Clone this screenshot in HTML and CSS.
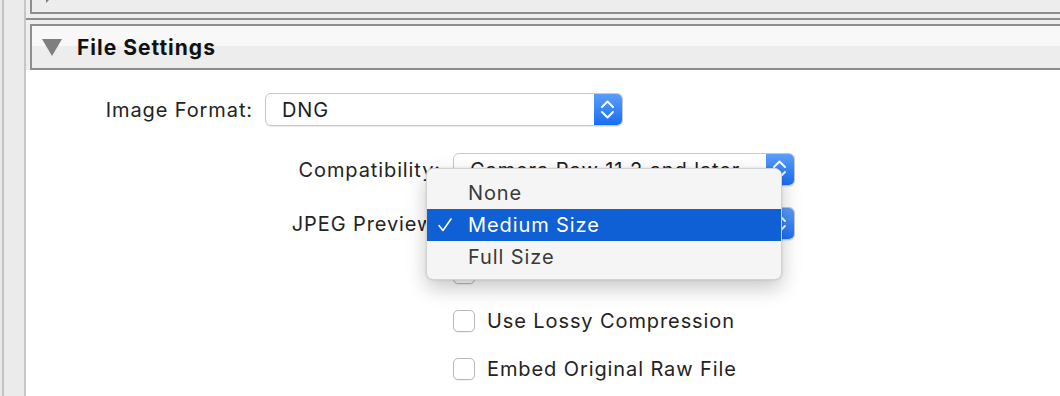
FILE: index.html
```html
<!DOCTYPE html>
<html>
<head>
<meta charset="utf-8">
<link rel="stylesheet" href="styles.css">
</head>
<body>
<div class="app">
  <aside class="rail"></aside>
  <main class="main">
    <div class="top">
      <div class="prev">
        <svg class="prev-tri" width="20" height="12" viewBox="0 0 20 12"><polygon points="14,-10 14,3 20,-3" fill="#7a7a7a"/></svg>
      </div>
      <div class="sep"></div>
      <div class="section-head">
        <svg class="disclosure" width="20" height="17" viewBox="0 0 20 17"><polygon points="0,0 20,0 10,17" fill="#7f7f7f"/></svg>
        <span class="section-title">File Settings</span>
      </div>
    </div>
    <div class="content">
      <div class="row row-main">
        <span class="lbl lbl-main">Image Format:</span>
        <div class="popup popup-main">
          <span class="popup-text">DNG</span>
          <span class="stepper"><svg width="29" height="33" viewBox="0 0 29 33"><polyline points="8,14 13.5,8.5 19,14" fill="none" stroke="#fff" stroke-width="2" stroke-linecap="round" stroke-linejoin="round"/><polyline points="8,19 13.5,24.5 19,19" fill="none" stroke="#fff" stroke-width="2" stroke-linecap="round" stroke-linejoin="round"/></svg></span>
        </div>
      </div>
      <div class="row row-sub row-compat">
        <span class="lbl lbl-sub">Compatibility:</span>
        <div class="popup popup-sub">
          <span class="popup-text">Camera Raw 11.2 and later</span>
          <span class="stepper"><svg width="29" height="33" viewBox="0 0 29 33"><polyline points="8,14 13.5,8.5 19,14" fill="none" stroke="#fff" stroke-width="2" stroke-linecap="round" stroke-linejoin="round"/><polyline points="8,19 13.5,24.5 19,19" fill="none" stroke="#fff" stroke-width="2" stroke-linecap="round" stroke-linejoin="round"/></svg></span>
        </div>
      </div>
      <div class="row row-sub row-jpeg">
        <span class="lbl lbl-sub">JPEG Preview:</span>
        <div class="popup popup-sub">
          <span class="popup-text">Medium Size</span>
          <span class="stepper"><svg width="29" height="33" viewBox="0 0 29 33"><polyline points="8,14 13.5,8.5 19,14" fill="none" stroke="#fff" stroke-width="2" stroke-linecap="round" stroke-linejoin="round"/><polyline points="8,19 13.5,24.5 19,19" fill="none" stroke="#fff" stroke-width="2" stroke-linecap="round" stroke-linejoin="round"/></svg></span>
        </div>
      </div>
      <div class="checks">
        <div class="check"><span class="box"></span><span class="check-label">Embed Fast Load Data</span></div>
        <div class="check"><span class="box"></span><span class="check-label">Use Lossy Compression</span></div>
        <div class="check"><span class="box"></span><span class="check-label">Embed Original Raw File</span></div>
      </div>
    </div>
  </main>
  <div class="menu">
    <div class="menu-item">None</div>
    <div class="menu-item selected"><svg class="tick" width="14" height="14" viewBox="0 0 14 14"><polyline points="1,7.5 5,12.5 13,1" fill="none" stroke="#fff" stroke-width="1.6" stroke-linecap="round" stroke-linejoin="round"/></svg>Medium Size</div>
    <div class="menu-item">Full Size</div>
  </div>
</div>
</body>
</html>
```

FILE: styles.css
```css
* { box-sizing: border-box; }
html, body { margin: 0; padding: 0; }
body {
  background: #ffffff;
  font-family: "Inter", "Noto Sans", sans-serif;
  color: #222222;
  overflow: hidden;
}
.app {
  position: relative;
  display: flex;
  width: 1060px;
  height: 396px;
}
.rail {
  flex: none;
  width: 24px;
  margin-left: 2px;
  height: 100%;
  background: #ebebeb;
  border-left: 2px solid #c2c2c2;
  border-right: 2px solid #c6c6c6;
  box-shadow: -2px 0 0 #e9e9e9;
}
.main {
  flex: 1;
  min-width: 0;
  display: flex;
  flex-direction: column;
}
.top {
  background: #eeeeee;
  height: 70px;
  display: flex;
  flex-direction: column;
}
.prev {
  margin-left: 4px;
  height: 14px;
  background: #ededed;
  border-left: 2px solid #8e8e8e;
  border-bottom: 2px solid #8e8e8e;
}
.prev-tri { display: block; }
.sep {
  margin-top: 4px;
  height: 2px;
  background: #8e8e8e;
}
.section-head {
  margin-top: 4px;
  margin-left: 4px;
  height: 46px;
  border-top: 2px solid #8e8e8e;
  border-left: 2px solid #8e8e8e;
  border-bottom: 2px solid #8e8e8e;
  background: linear-gradient(#f8f8f8 0, #f8f8f8 20px, #ededed 20px, #ededed 100%);
  display: flex;
  align-items: center;
  padding-left: 10px;
  gap: 15px;
}
.disclosure { display: block; flex: none; }
.section-title {
  font-weight: 700;
  font-size: 21px;
  color: #111111;
  letter-spacing: 1px;
}
.content {
  display: flex;
  flex-direction: column;
}
.row {
  display: flex;
  align-items: center;
  gap: 12px;
}
.row-main { margin-top: 23px; padding-left: 47px; }
.row-compat { margin-top: 27px; padding-left: 215px; }
.row-jpeg { margin-top: 21px; padding-left: 215px; }
.lbl {
  font-size: 20px;
  letter-spacing: 0.9px;
  text-align: right;
  color: #232323;
  white-space: nowrap;
}
.lbl-main { width: 180px; }
.lbl-sub { width: 200px; }
.popup {
  position: relative;
  display: flex;
  align-items: center;
  height: 33px;
  background: #ffffff;
  border: 1px solid #c8c8c8;
  border-radius: 6px;
  box-shadow: 0 1px 1px rgba(0,0,0,0.08);
  overflow: hidden;
}
.popup-main { width: 358px; }
.popup-sub { width: 342px; }
.popup-text {
  flex: 1;
  padding-left: 16px;
  font-size: 20px;
  letter-spacing: 0.9px;
  color: #1d1d1d;
  white-space: nowrap;
}
.stepper {
  flex: none;
  width: 29px;
  height: 33px;
  margin: -1px -1px -1px 0;
  background: linear-gradient(#5d9ff9, #186cf3);
  border-radius: 0 6px 6px 0;
}
.stepper svg { display: block; }
.checks {
  margin-top: 21px;
  padding-left: 427px;
  display: flex;
  flex-direction: column;
  gap: 25px;
}
.check {
  display: flex;
  align-items: center;
  gap: 12px;
  height: 23px;
}
.box {
  flex: none;
  width: 22px;
  height: 22px;
  border: 1px solid #b9b9b9;
  border-radius: 5px;
  background: #ffffff;
  box-shadow: 0 1px 1px rgba(0,0,0,0.06);
}
.check-label {
  font-size: 20px;
  letter-spacing: 0.9px;
  color: #232323;
}
.menu {
  position: absolute;
  left: 426px;
  top: 168px;
  width: 356px;
  height: 112px;
  padding: 8px 0;
  background: #f5f5f5;
  border: 1px solid #d2d2d2;
  border-radius: 7px;
  box-shadow: 0 8px 20px rgba(0,0,0,0.22), 0 0 2px rgba(0,0,0,0.15);
  display: flex;
  flex-direction: column;
}
.menu-item {
  position: relative;
  height: 32px;
  line-height: 32px;
  padding-left: 41px;
  font-size: 20px;
  letter-spacing: 0.9px;
  color: #3a3a3a;
}
.menu-item.selected {
  background: #0f5fd5;
  color: #ffffff;
}
.tick {
  position: absolute;
  left: 11px;
  top: 9px;
}
```
